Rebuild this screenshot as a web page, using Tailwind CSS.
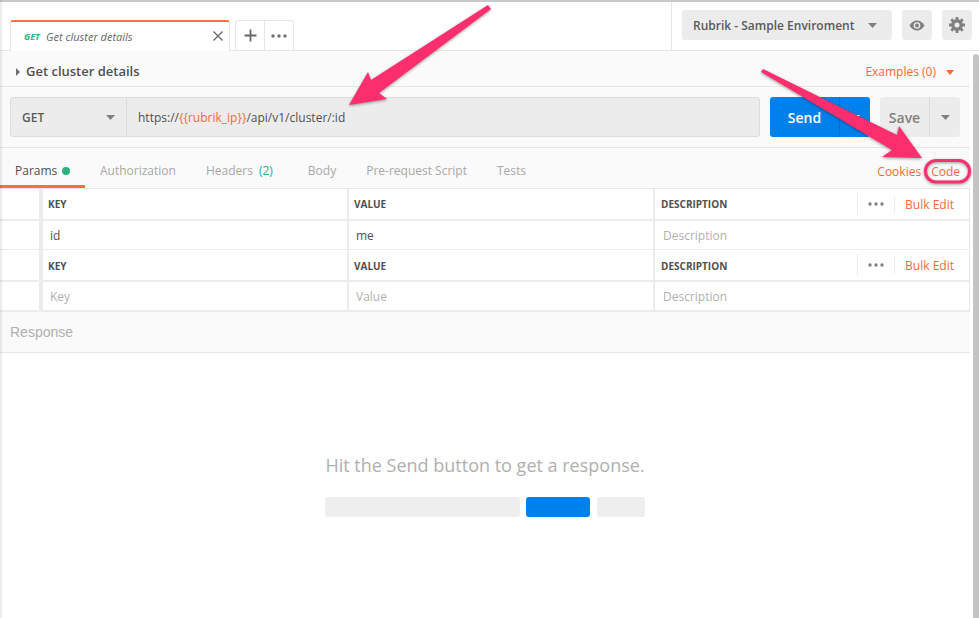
<!DOCTYPE html>
<html>
<head>
<meta charset="utf-8">
<script src="https://cdn.jsdelivr.net/npm/@tailwindcss/browser@4"></script>
</head>
<body class="bg-white">
<div class="relative w-[979px] h-[618px] overflow-hidden bg-white font-['Open_Sans',sans-serif] text-[12px] text-[#505050]">

  <!-- top bar -->
  <header class="flex h-[51px] border-t-2 border-b border-[#c9c9c9] border-b-[#e6e6e6]">
    <div class="flex items-end flex-1 pl-[10px]">
      <div class="flex items-center w-[220px] h-[31px] -mb-px bg-white border-t-2 border-[#f9703c] border-x border-x-[#e6e6e6] rounded-t-[3px] pl-[13px] pr-[5px]">
        <span class="text-[9px] font-bold italic text-[#26b47f] w-[22px] pt-[1px]">GET</span>
        <span class="italic text-[11px] flex-1 text-[#666] pt-[1px]">Get cluster details</span>
        <svg class="w-[12px] h-[12px] mb-[2px]" viewBox="0 0 12 12"><path d="M1.500 1.500l9 9M10.500 1.500l-9 9" stroke="#6b6b6b" stroke-width="1.400" fill="none"/></svg>
      </div>
      <div class="flex h-[30px] ml-[5px] border border-b-0 border-[#e6e6e6] rounded-t-[3px]">
        <div class="flex items-center justify-center w-[29px] border-r border-[#e6e6e6]">
          <svg class="w-[13px] h-[13px]" viewBox="0 0 13 13"><path d="M6.500 0.500v12M0.500 6.500h12" stroke="#666" stroke-width="1.800" fill="none"/></svg>
        </div>
        <div class="flex items-center justify-center w-[28px]">
          <svg class="w-[16px] h-[4px]" viewBox="0 0 16 4"><circle cx="2" cy="2" r="1.700" fill="#707070"/><circle cx="8" cy="2" r="1.700" fill="#707070"/><circle cx="14" cy="2" r="1.700" fill="#707070"/></svg>
        </div>
      </div>
    </div>
    <div class="flex items-start w-[308px] h-full border-l border-[#e6e6e6] pl-[10px] pt-[8px] gap-[10px]">
      <div class="flex items-center justify-between w-[210px] h-[30px] bg-[#ececec] rounded-[3px] pl-[11px] pr-[15px]">
        <span class="font-semibold pt-[1px] text-[#5a5a5a]">Rubrik - Sample Enviroment</span>
        <svg class="w-[9px] h-[5px]" viewBox="0 0 9 5"><path d="M0 0h9L4.500 5z" fill="#808080"/></svg>
      </div>
      <div class="flex items-center justify-center w-[30px] h-[30px] bg-[#ececec] rounded-[3px]">
        <svg class="w-[16px] h-[11px]" viewBox="0 0 16 11"><path d="M0.500 5.500C2.500 2 5 .5 8 .5s5.500 1.500 7.500 5c-2 3.500-4.500 5-7.500 5S2.500 9 .5 5.500z" fill="#808080"/><circle cx="8" cy="5.500" r="3.300" fill="#ececec"/><circle cx="8" cy="5.500" r="2" fill="#808080"/></svg>
      </div>
      <div class="flex items-center justify-center w-[30px] h-[30px] bg-[#ececec] rounded-[3px]">
        <svg class="w-[16px] h-[16px]" viewBox="0 0 16 16"><circle cx="8" cy="8" r="4.200" fill="none" stroke="#808080" stroke-width="3.400"/><path d="M8 0v3M8 13v3M0 8h3M13 8h3M2.300 2.300l2.100 2.100M11.600 11.600l2.100 2.100M13.700 2.300l-2.100 2.100M4.400 11.600l-2.100 2.100" stroke="#808080" stroke-width="2.800" fill="none"/></svg>
      </div>
    </div>
  </header>

  <div class="flex">
    <main class="w-[970px] h-[567px] flex flex-col">
      <!-- title row -->
      <div class="flex items-center justify-between h-[36px] bg-[#fafafa] border-b border-[#e6e6e6] pl-[16px] pr-[16px] pt-[7px]">
        <div class="flex items-center gap-[6px]">
          <svg class="w-[4px] h-[8px]" viewBox="0 0 4 8"><path d="M0 0l4 4-4 4z" fill="#707070"/></svg>
          <span class="text-[13px] font-semibold">Get cluster details</span>
        </div>
        <div class="flex items-center gap-[10px] text-[#f26b3a]">
          <span>Examples (0)</span>
          <svg class="w-[8px] h-[5px]" viewBox="0 0 8 5"><path d="M0 0h8L4 5z" fill="#f26b3a"/></svg>
        </div>
      </div>

      <!-- url row -->
      <div class="flex items-center h-[61px] bg-[#fafafa] border-b border-[#e6e6e6] pl-[10px] pr-[8px]">
        <div class="flex w-[750px] h-[40px] bg-[#ececec] border border-[#dcdcdc] rounded-[3px]">
          <div class="flex items-center justify-between w-[116px] border-r border-[#dcdcdc] pl-[11px] pr-[11px]">
            <span class="font-semibold pt-[1px] text-[#5a5a5a]">GET</span>
            <svg class="w-[9px] h-[5px]" viewBox="0 0 9 5"><path d="M0 0h9L4.500 5z" fill="#808080"/></svg>
          </div>
          <div class="flex items-center pl-[11px] pt-[1px]">https://<span class="text-[#f26b3a]">{{rubrik_ip}}</span>/api/v1/cluster/:id</div>
        </div>
        <div class="flex ml-[10px] w-[100px] h-[40px] bg-[#0080eb] rounded-[3px] text-white">
          <div class="flex items-center justify-center w-[69px] text-[14px] font-semibold">Send</div>
          <div class="flex items-center justify-center flex-1 border-l border-[#0071d0]">
            <svg class="w-[9px] h-[5px]" viewBox="0 0 9 5"><path d="M0 0h9L4.500 5z" fill="#fff"/></svg>
          </div>
        </div>
        <div class="flex ml-[10px] w-[80px] h-[40px] bg-[#ececec] rounded-[3px] text-[#808080]">
          <div class="flex items-center justify-center w-[49px] text-[14px] font-semibold">Save</div>
          <div class="flex items-center justify-center flex-1 border-l border-[#dcdcdc]">
            <svg class="w-[9px] h-[5px]" viewBox="0 0 9 5"><path d="M0 0h9L4.500 5z" fill="#808080"/></svg>
          </div>
        </div>
      </div>

      <!-- request tabs -->
      <div class="flex items-stretch justify-between h-[41px] bg-[#fafafa] border-b border-[#e6e6e6] pr-[10px]">
        <div class="flex text-[#a8a8a8]">
          <div class="flex items-center gap-[5px] w-[85px] h-[40px] pl-[15px] pt-[8px] border-b-[3px] border-[#f9703c] text-[#505050]">
            <span>Params</span><span class="w-[8px] h-[8px] rounded-full bg-[#26b47f]"></span>
          </div>
          <div class="flex items-center ml-[15px] pt-[6px]">Authorization</div>
          <div class="flex items-center ml-[30px] pt-[6px]">Headers<span class="ml-[6px] text-[#26b47f]">(2)</span></div>
          <div class="flex items-center ml-[35px] pt-[6px]">Body</div>
          <div class="flex items-center ml-[30px] pt-[6px]">Pre-request Script</div>
          <div class="flex items-center ml-[30px] pt-[6px]">Tests</div>
        </div>
        <div class="flex items-center gap-[10px] pt-[7px] text-[#f26b3a]">
          <span>Cookies</span><span>Code</span>
        </div>
      </div>

      <!-- params table -->
      <div class="flex flex-col bg-[#ececec] border-r border-[#e6e6e6]">
        <div class="grid grid-cols-[39px_306px_304px_314px] gap-x-[2px] h-[30px] mb-[2px]">
          <div class="bg-white"></div>
          <div class="flex items-center bg-white ml-[2px] pl-[5px] pt-[1px] text-[10px] font-bold">KEY</div>
          <div class="flex items-center bg-white pl-[5px] pt-[1px] text-[10px] font-bold">VALUE</div>
          <div class="flex items-center justify-between bg-white pl-[6px] pr-[15px] text-[10px] font-bold">
            <span class="pt-[1px]">DESCRIPTION</span>
            <div class="flex items-center h-full">
              <div class="flex items-center justify-center w-[37px] h-[22px] border-l border-[#ececec]">
                <svg class="w-[16px] h-[4px] mb-[1px]" viewBox="0 0 16 4"><circle cx="2" cy="2" r="1.700" fill="#808080"/><circle cx="8" cy="2" r="1.700" fill="#808080"/><circle cx="14" cy="2" r="1.700" fill="#808080"/></svg>
              </div>
              <span class="pl-[10px] pt-[1px] text-[12px] leading-[16px] font-normal text-[#f26b3a] border-l border-[#ececec]">Bulk Edit</span>
            </div>
          </div>
        </div>

        <div class="grid grid-cols-[39px_306px_304px_314px] gap-x-[2px] h-[28px] mb-[1px]">
          <div class="bg-white"></div>
          <div class="flex items-center bg-white ml-[2px] pl-[7px] pt-[2px]">id</div>
          <div class="flex items-center bg-white pl-[7px] pt-[2px]">me</div>
          <div class="flex items-center bg-white pl-[8px] pt-[2px] text-[#b0b0b0]">Description</div>
        </div>

        <div class="grid grid-cols-[39px_306px_304px_314px] gap-x-[2px] h-[30px] mb-[2px]">
          <div class="bg-white"></div>
          <div class="flex items-center bg-white ml-[2px] pl-[5px] pt-[2px] text-[10px] font-bold">KEY</div>
          <div class="flex items-center bg-white pl-[5px] pt-[2px] text-[10px] font-bold">VALUE</div>
          <div class="flex items-center justify-between bg-white pl-[6px] pr-[15px] text-[10px] font-bold">
            <span class="pt-[2px]">DESCRIPTION</span>
            <div class="flex items-center h-full">
              <div class="flex items-center justify-center w-[37px] h-[22px] border-l border-[#ececec]">
                <svg class="w-[16px] h-[4px] mb-[1px]" viewBox="0 0 16 4"><circle cx="2" cy="2" r="1.700" fill="#808080"/><circle cx="8" cy="2" r="1.700" fill="#808080"/><circle cx="14" cy="2" r="1.700" fill="#808080"/></svg>
              </div>
              <span class="pl-[10px] pt-[2px] text-[12px] leading-[16px] font-normal text-[#f26b3a] border-l border-[#ececec]">Bulk Edit</span>
            </div>
          </div>
        </div>

        <div class="grid grid-cols-[39px_306px_304px_314px] gap-x-[2px] h-[28px] mb-[2px]">
          <div class="bg-white"></div>
          <div class="flex items-center bg-white ml-[2px] pl-[7px] pt-[2px] text-[#b0b0b0]">Key</div>
          <div class="flex items-center bg-white pl-[7px] pt-[2px] text-[#b0b0b0]">Value</div>
          <div class="flex items-center bg-white pl-[8px] pt-[2px] text-[#b0b0b0]">Description</div>
        </div>
      </div>

      <!-- response -->
      <div class="flex items-center h-[41px] bg-[#fafafa] border-b border-[#e6e6e6] pl-[10px] font-['Liberation_Sans',sans-serif] text-[14px] text-[#b0b0b0]">Response</div>

      <div class="flex flex-col items-center pt-[99px]">
        <p class="text-[18px] leading-[26px] text-[#b0b0b0]">Hit the Send button to get a response.</p>
        <div class="flex mt-[19px] h-[20px]">
          <div class="w-[195px] bg-[#eeeeee] rounded-[3px]"></div>
          <div class="w-[64px] ml-[6px] bg-[#0080eb] rounded-[3px]"></div>
          <div class="w-[48px] ml-[7px] bg-[#eeeeee] rounded-[3px]"></div>
        </div>
      </div>
    </main>
    <div class="ml-[3px] mt-[3px] w-[6px] h-[564px] bg-[#c4c4c4] rounded-t-[3px]"></div>
  </div>

  <!-- left edge shadow -->
  <div class="absolute left-0 top-0 bottom-0 w-[3px] bg-gradient-to-r from-black/10 to-transparent"></div>

  <!-- annotations -->
  <svg class="absolute left-0 top-0 w-[979px] h-[618px] drop-shadow-[0_1px_1.5px_rgba(0,0,0,0.4)]" viewBox="0 0 979 618">
    <polygon points="349,105 368,72 371,80 488,5 491,9 379,93 387,99" fill="#fd2e6d"/>
    <polygon points="922,158 899,126 897,135 763,69 761,72 892,150 882,157" fill="#fd2e6d"/>
    <rect x="925.500" y="160.500" width="44" height="21.500" rx="10.500" fill="none" stroke="#fd2e6d" stroke-width="3"/>
  </svg>
</div>
</body>
</html>
